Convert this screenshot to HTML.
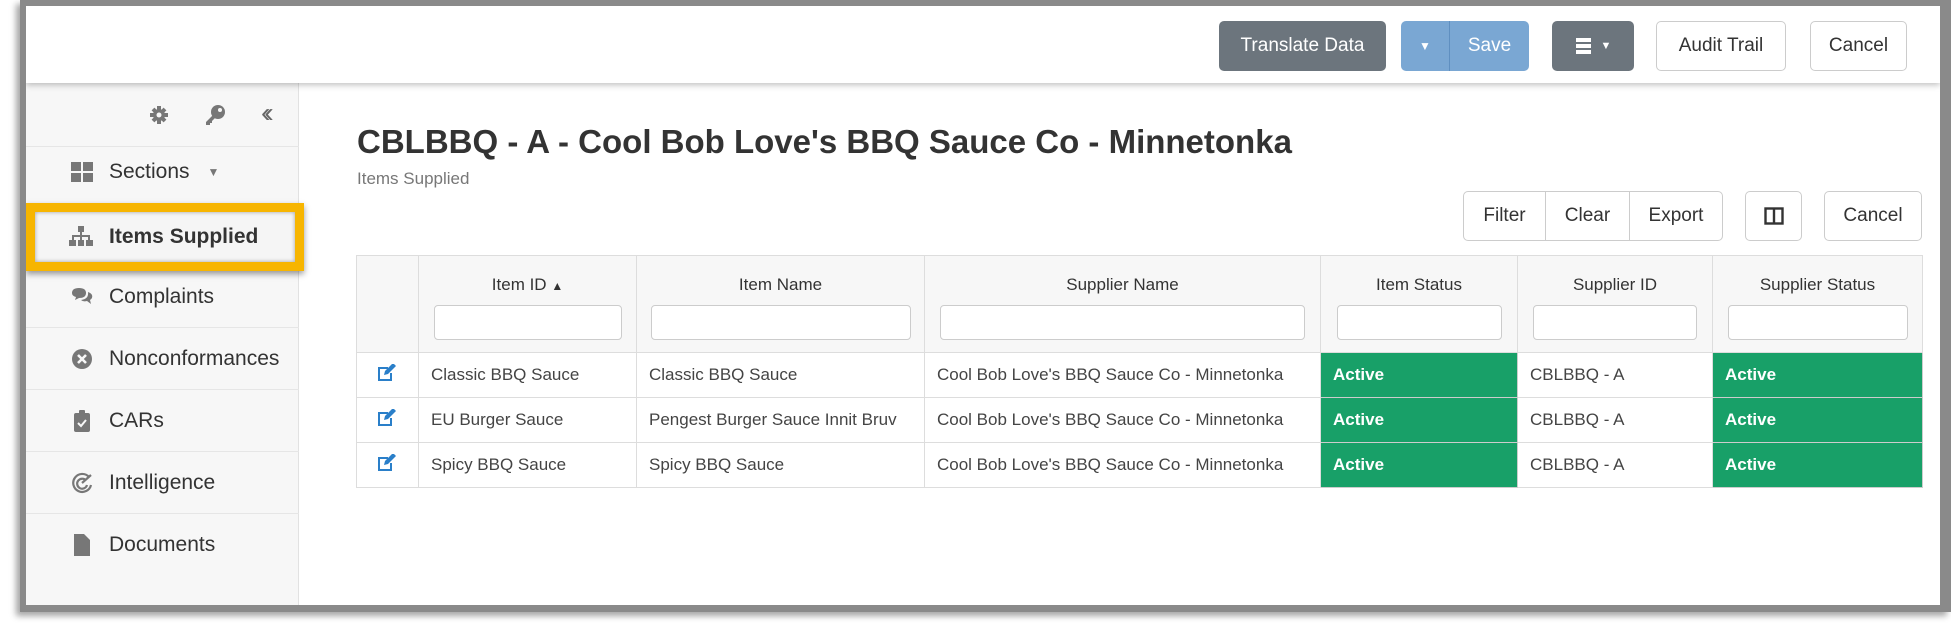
<!DOCTYPE html>
<html><head><meta charset="utf-8"><style>
*{box-sizing:border-box;margin:0;padding:0}
body{width:1951px;height:623px;background:#fff;font-family:"Liberation Sans",sans-serif;position:relative;overflow:hidden;color:#333}
.frame{position:absolute;left:20px;top:0;width:1931px;height:612px;background:#8a8a8a;box-shadow:-4px 4px 6px rgba(0,0,0,.35)}
.inner{position:absolute;left:26px;top:6px;width:1914px;height:599px;background:#fff;overflow:hidden}
.hdr{position:absolute;left:0;top:0;width:100%;height:77px;background:#fff;box-shadow:0 2px 6px rgba(0,0,0,.25);z-index:2}
.btn{position:absolute;top:15px;height:50px;border-radius:5px;font-size:19px;display:flex;align-items:center;justify-content:center}
.side{position:absolute;left:0;top:77px;width:273px;height:530px;background:#f7f7f7;border-right:1px solid #e2e2e2}
.sitem{position:absolute;left:0;width:273px;height:62px;font-size:21px;color:#333;display:flex;align-items:center;padding-left:83px}
.sitem.b{border-bottom:1px solid #e6e6e6}
.ic{position:absolute;left:45px;top:50%;transform:translateY(-50%);width:22px;height:22px;fill:#777}
.hl{position:absolute;left:0;top:197px;width:278px;height:68px;border:9px solid #f7b500;box-shadow:0 3px 6px rgba(0,0,0,.4);z-index:3}
.hl .in{position:absolute;inset:0;background:#f5f5f5;box-shadow:inset 0 0 4px rgba(0,0,0,.35)}
table{position:absolute;left:330px;top:249px;border-collapse:collapse;font-size:17px;color:#444}
td,th{border:1px solid #ddd}
th{background:#f7f7f7;font-weight:normal;color:#333;height:97px;vertical-align:top;padding-top:19px}
th .f{margin:10px auto 0;height:35px;border:1px solid #ccc;border-radius:4px;background:#fff}
td{height:45px;padding-left:12px;white-space:nowrap}
td.g{background:#18a068;color:#fff;font-weight:bold;border-color:#ccc}
.tb{position:absolute;top:185px;height:50px;border:1px solid #ccc;border-radius:5px;background:#fff;font-size:19px;display:flex;align-items:center}
</style></head><body>
<div class="frame"></div>
<div class="inner">
<div class="hdr">
 <div class="btn" style="left:1193px;width:167px;background:#6c757d;color:#fff">Translate Data</div>
 <div class="btn" style="left:1375px;width:128px;background:#7aa7d3;color:#fff"><span style="width:49px;border-right:1px solid #5f8fc0;height:100%;display:flex;align-items:center;justify-content:center;font-size:12px">▼</span><span style="flex:1;text-align:center">Save</span></div>
 <div class="btn" style="left:1526px;width:82px;background:#6c757d;color:#fff"><svg width="18" height="18" viewBox="0 0 18 18" fill="#fff"><rect x="1" y="1" width="15" height="4"/><rect x="1" y="7" width="15" height="4"/><rect x="1" y="13" width="15" height="4"/></svg><span style="font-size:11px;margin-left:8px">▼</span></div>
 <div class="btn" style="left:1630px;width:130px;border:1px solid #ccc;color:#333">Audit Trail</div>
 <div class="btn" style="left:1784px;width:97px;border:1px solid #ccc;color:#333">Cancel</div>
</div>
<div class="side">
 <svg style="position:absolute;left:123px;top:22px" width="20" height="20" viewBox="0 0 20 20" fill="#777"><circle cx="10" cy="10" r="6"/><g stroke="#777" stroke-width="4"><line x1="10" y1="1" x2="10" y2="19"/><line x1="1" y1="10" x2="19" y2="10"/><line x1="4" y1="4" x2="16" y2="16"/><line x1="16" y1="4" x2="4" y2="16"/></g><circle cx="10" cy="10" r="2.5" fill="#f7f7f7"/></svg>
 <svg style="position:absolute;left:178px;top:21px" width="22" height="22" viewBox="0 0 22 22" fill="#777"><circle cx="14" cy="8" r="7"/><path d="M9 11 L2 18 L2 21 L6 21 L6 19 L8 19 L8 17 L11 14Z"/><circle cx="16" cy="6" r="2" fill="#f7f7f7"/></svg>
 <div style="position:absolute;left:235px;top:14px;font-size:28px;color:#666;letter-spacing:-6px">‹‹</div>
 <div style="position:absolute;left:0;top:63px;width:273px;border-top:1px solid #e6e6e6"></div>
 <div class="sitem" style="top:58px"><svg class="ic" viewBox="0 0 22 22"><rect x="0" y="1" width="10" height="9"/><rect x="12" y="1" width="10" height="9"/><rect x="0" y="12" width="10" height="9"/><rect x="12" y="12" width="10" height="9"/></svg>Sections<span style="font-size:12px;color:#777;margin-left:18px">▼</span></div>
 <div class="sitem b" style="top:183px"><svg class="ic" viewBox="0 0 22 22"><path d="M1 7 Q1 2 8 2 Q15 2 15 7 Q15 12 8 12 L4 14 L5 11 Q1 10 1 7Z"/><path d="M10 14 Q12 16 16 15 L20 18 L19 14 Q22 12 21 9 Q20 7 17 6 Q18 13 10 14Z"/></svg>Complaints</div>
 <div class="sitem b" style="top:245px"><svg class="ic" viewBox="0 0 22 22"><circle cx="11" cy="11" r="10"/><path d="M7 7 L15 15 M15 7 L7 15" stroke="#f7f7f7" stroke-width="2.6"/></svg>Nonconformances</div>
 <div class="sitem b" style="top:307px"><svg class="ic" viewBox="0 0 22 22"><rect x="3" y="3" width="16" height="19" rx="2"/><rect x="8" y="0" width="6" height="5" rx="1"/><path d="M7 13 L10 16 L15 10" stroke="#f7f7f7" stroke-width="2" fill="none"/></svg>CARs</div>
 <div class="sitem b" style="top:369px"><svg class="ic" viewBox="0 0 22 22" style="fill:none" stroke="#777" stroke-width="2.2"><path d="M18 5 A9 9 0 1 0 20 13"/><path d="M15 8.5 A5 5 0 1 0 16 13"/><path d="M11 11 L20 3"/></svg>Intelligence</div>
 <div class="sitem" style="top:431px"><svg class="ic" viewBox="0 0 22 22"><path d="M3 0 L13 0 L19 6 L19 22 L3 22Z"/></svg>Documents</div>
</div>
<div class="hl"><div class="in"></div><div style="position:absolute;left:74px;top:0;height:50px;display:flex;align-items:center;font-size:21px;font-weight:bold;color:#333">Items Supplied</div><svg style="position:absolute;left:34px;top:14px" width="24" height="22" viewBox="0 0 24 22" fill="#777"><rect x="9" y="0" width="6" height="6"/><rect x="11" y="6" width="2" height="4"/><rect x="3" y="9" width="18" height="2"/><rect x="3" y="9" width="2" height="5"/><rect x="19" y="9" width="2" height="5"/><rect x="11" y="9" width="2" height="5"/><rect x="0" y="14" width="7" height="6"/><rect x="9" y="14" width="6" height="6"/><rect x="17" y="14" width="7" height="6"/></svg></div>

<div style="position:absolute;left:331px;top:117px;font-size:33px;font-weight:bold;color:#333">CBLBBQ - A - Cool Bob Love's BBQ Sauce Co - Minnetonka</div>
<div style="position:absolute;left:331px;top:163px;font-size:17px;color:#777">Items Supplied</div>

<div class="tb" style="left:1437px;width:260px"><span style="width:82px;text-align:center;border-right:1px solid #ccc;line-height:48px">Filter</span><span style="width:84px;text-align:center;border-right:1px solid #ccc;line-height:48px">Clear</span><span style="flex:1;text-align:center">Export</span></div>
<div class="tb" style="left:1719px;width:57px;justify-content:center"><svg width="20" height="18" viewBox="0 0 20 18" fill="none" stroke="#333" stroke-width="2.4"><rect x="1.5" y="1.5" width="17" height="15"/><line x1="10" y1="1" x2="10" y2="17"/></svg></div>
<div class="tb" style="left:1798px;width:98px;justify-content:center">Cancel</div>

<table>
<tr><th style="width:62px"></th><th style="width:218px">Item ID <span style="font-size:12px">▲</span><div class="f" style="width:188px"></div></th><th style="width:288px">Item Name<div class="f" style="width:260px"></div></th><th style="width:396px">Supplier Name<div class="f" style="width:365px"></div></th><th style="width:197px">Item Status<div class="f" style="width:165px"></div></th><th style="width:195px">Supplier ID<div class="f" style="width:164px"></div></th><th style="width:210px">Supplier Status<div class="f" style="width:180px"></div></th></tr>
<tr><td style="padding-left:20px"><svg width="20" height="18" viewBox="0 0 20 18"><path d="M1 3 H11 V5 H3 V15 H13 V9 H15 V17 H1Z" fill="#2a7fc9"/><path d="M7 11 L8 7 L16 -1 L19 2 L11 10Z" fill="#2a7fc9"/></svg></td><td>Classic BBQ Sauce</td><td>Classic BBQ Sauce</td><td>Cool Bob Love's BBQ Sauce Co - Minnetonka</td><td class="g">Active</td><td>CBLBBQ - A</td><td class="g">Active</td></tr>
<tr><td style="padding-left:20px"><svg width="20" height="18" viewBox="0 0 20 18"><path d="M1 3 H11 V5 H3 V15 H13 V9 H15 V17 H1Z" fill="#2a7fc9"/><path d="M7 11 L8 7 L16 -1 L19 2 L11 10Z" fill="#2a7fc9"/></svg></td><td>EU Burger Sauce</td><td>Pengest Burger Sauce Innit Bruv</td><td>Cool Bob Love's BBQ Sauce Co - Minnetonka</td><td class="g">Active</td><td>CBLBBQ - A</td><td class="g">Active</td></tr>
<tr><td style="padding-left:20px"><svg width="20" height="18" viewBox="0 0 20 18"><path d="M1 3 H11 V5 H3 V15 H13 V9 H15 V17 H1Z" fill="#2a7fc9"/><path d="M7 11 L8 7 L16 -1 L19 2 L11 10Z" fill="#2a7fc9"/></svg></td><td>Spicy BBQ Sauce</td><td>Spicy BBQ Sauce</td><td>Cool Bob Love's BBQ Sauce Co - Minnetonka</td><td class="g">Active</td><td>CBLBBQ - A</td><td class="g">Active</td></tr>
</table>
</div>
</body></html>
